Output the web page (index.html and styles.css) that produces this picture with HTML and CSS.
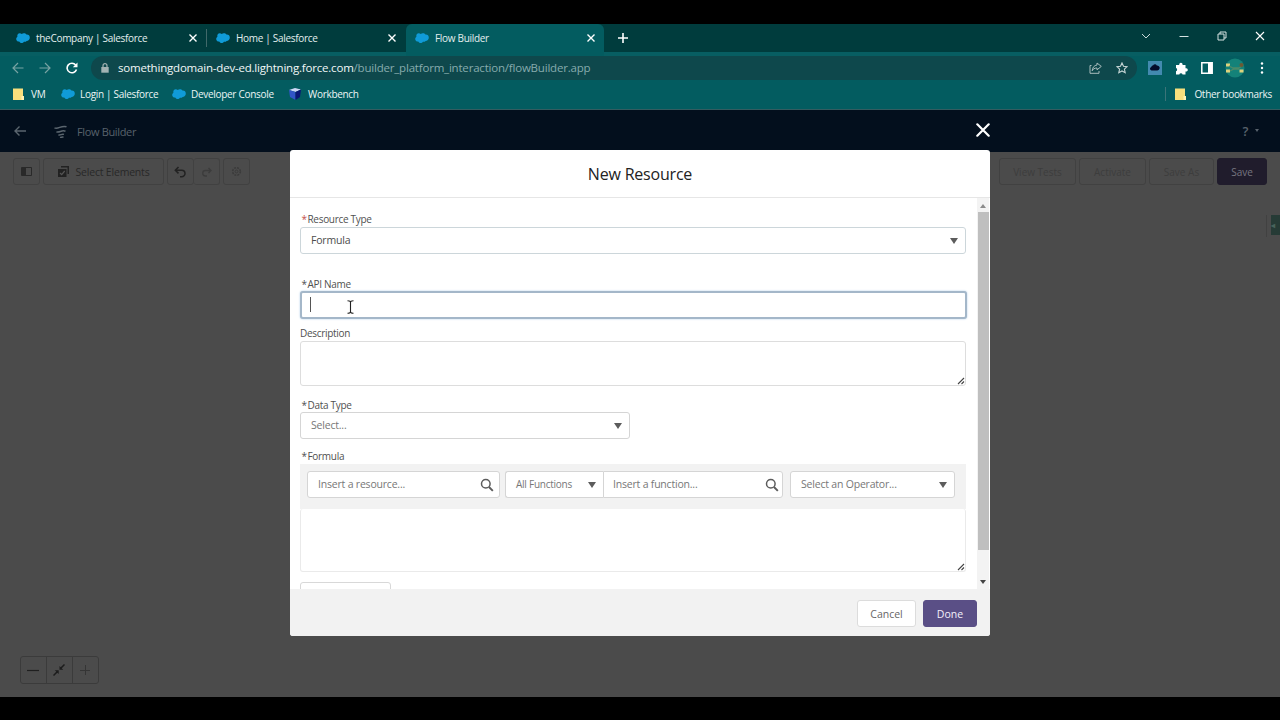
FILE: index.html
```
<!DOCTYPE html>
<html lang="en">
<head>
    <meta charset="UTF-8">
    <meta name="viewport" content="width=device-width, initial-scale=1.0">
    <title>Flow Builder</title>
    <link rel="stylesheet" href="styles.css">
</head>
<body>
    <svg class="defs" width="0" height="0">
        <symbol id="cloud" viewBox="0 0 14 10">
            <path fill="#109bd7" d="M5.8 1.1A2.9 2.9 0 0 1 8 .3c1 0 1.900.5 2.400 1.300A3.200 3.200 0 0 1 13.800 4.700c0 1.800-1.500 3.200-3.200 3.200-.6.8-1.700 1.200-2.600.8C7.500 9.500 6.600 10 5.600 10 4.500 10 3.600 9.400 3.200 8.500 1.500 8.700.200 7.500.200 5.900c0-.9.500-1.700 1.200-2.200C.9 2 2.100.300 3.700.300c.8 0 1.600.3 2.100.8z"/>
        </symbol>
        <symbol id="cross" viewBox="0 0 10 10">
            <path d="M1.500 1.500l7 7M8.500 1.500l-7 7" fill="none" stroke="currentColor"/>
        </symbol>
        <symbol id="search" viewBox="0 0 14 14">
            <circle cx="5.800" cy="5.800" r="4.300" fill="none" stroke="#5c5c5c" stroke-width="1.500"/>
            <path d="M9 9l3.800 3.900" stroke="#5c5c5c" stroke-width="1.900"/>
        </symbol>
        <symbol id="resize" viewBox="0 0 8 8">
            <path d="M1 7l6-6M4.500 7L7 4.500" stroke="#444" stroke-width="1.100"/>
        </symbol>
        <symbol id="note" viewBox="0 0 11 12">
            <path fill="#f7df7c" d="M0 .500h10v7.500h1v4H0z"/>
            <path fill="#fff3b5" d="M8.500 8H11v4H8.500z"/>
        </symbol>
    </svg>

    <div class="screen">
        <!-- browser -->
        <div class="tabs">
            <div class="tab first">
                <svg class="cloud"><use href="#cloud"/></svg>
                <span>theCompany | Salesforce</span>
                <svg class="close"><use href="#cross"/></svg>
            </div>
            <div class="tab second">
                <svg class="cloud"><use href="#cloud"/></svg>
                <span>Home | Salesforce</span>
                <svg class="close"><use href="#cross"/></svg>
            </div>
            <div class="tab active">
                <svg class="cloud"><use href="#cloud"/></svg>
                <span>Flow Builder</span>
                <svg class="close"><use href="#cross"/></svg>
            </div>
            <svg class="new-tab" viewBox="0 0 12 12"><path d="M6 1v10M1 6h10" stroke="#fff" stroke-width="1.600"/></svg>
            <div class="window-btns">
                <svg width="10" height="10" viewBox="0 0 10 10"><path d="M1 3l4 4 4-4" fill="none" stroke="#c8dada"/></svg>
                <svg width="10" height="10" viewBox="0 0 10 10"><path d="M.5 5.500h9" stroke="#d5e2e2"/></svg>
                <svg width="10" height="10" viewBox="0 0 10 10"><path d="M1 3h6v6H1zM3 3V1h6v6H7" fill="none" stroke="#d5e2e2"/></svg>
                <svg width="10" height="10" viewBox="0 0 10 10"><path d="M1 1l8 8M9 1L1 9" stroke="#fff" stroke-width="1.100"/></svg>
            </div>
        </div>

        <div class="address-row">
            <svg class="nav" viewBox="0 0 12 12"><path d="M11.500 6H1M6 1L1 6l5 5" fill="none" stroke="#78a3a3" stroke-width="1.200"/></svg>
            <svg class="nav" viewBox="0 0 12 12"><path d="M.5 6H11M6 1l5 5-5 5" fill="none" stroke="#78a3a3" stroke-width="1.200"/></svg>
            <svg class="nav" viewBox="0 0 12 12"><path d="M10.500 7.500A4.800 4.800 0 1 1 9.700 3" fill="none" stroke="#fff" stroke-width="1.600"/><path d="M11.500.5v4.700H6.800z" fill="#fff"/></svg>
            <div class="address">
                <svg width="8" height="10" viewBox="0 0 8 10"><path d="M2 4.500V2.700a2 2 0 0 1 4 0v1.800" fill="none" stroke="#a3b3b3" stroke-width="1.200"/><path d="M.3 4h7.400v5.700H.3z" fill="#a3b3b3"/></svg>
                <p class="url"><span>somethingdomain-dev-ed.lightning.force.com</span>/builder_platform_interaction/flowBuilder.app</p>
                <svg class="share" viewBox="0 0 13 12"><path d="M2.500 3.500H1v7.800h9V9" fill="none" stroke="#a9bcbc"/><path d="M8 1l4.300 3.400L8 7.800V6C5.500 6 4 7 3.200 8.800 3.400 5.500 5.300 3.300 8 3z" fill="none" stroke="#a9bcbc"/></svg>
                <svg class="star" viewBox="0 0 12 12"><path d="M6 .9l1.500 3.300 3.600.4-2.700 2.500.8 3.600L6 8.900l-3.200 1.800.8-3.600L.9 4.600l3.600-.4z" fill="none" stroke="#c5d5d5" stroke-width="1.100"/></svg>
            </div>
            <div class="extensions">
                <svg width="14" height="14" viewBox="0 0 14 14"><path d="M0 0h14v14H0z" fill="#438ab0"/><path d="M5 4.500c1-1.500 3-1.500 3.800-.1 1.500-.1 2.900.9 2.900 2.400S10.300 9.600 9 9.500H3.500C1.500 9 1.500 6.500 3.300 6c.1-.8.800-1.500 1.700-1.500z" fill="#030b2a"/></svg>
                <svg width="13" height="13" viewBox="0 0 13 13"><path d="M1 3h3.300a1.700 1.700 0 1 1 3.200 0h3v3.300a1.700 1.700 0 1 1 0 3.200v3H7.600a1.700 1.700 0 0 0-3.300 0H1V9.300a1.700 1.700 0 0 0 0-3.200z" fill="#fff"/></svg>
                <svg width="12" height="12" viewBox="0 0 12 12"><path d="M.8.8h10.400v10.400H.8z" fill="none" stroke="#fff" stroke-width="1.500"/><path d="M7 1h4v10H7z" fill="#fff"/></svg>
                <svg class="avatar" viewBox="0 0 20 20"><circle cx="10" cy="10" r="9.500" fill="#148279"/><path d="M1 5.500h4v3H1zM1 11.500h4v3H1zM14.500 11.500h4v3h-4z" fill="#ddd27c"/><path d="M4 8l4 2h6l3-2M5 13l4-2h5" fill="none" stroke="#4c8a68" stroke-width="1.300"/><circle cx="16.500" cy="7" r="2" fill="#6b5933"/></svg>
                <svg width="4" height="12" viewBox="0 0 4 12"><g fill="#fff"><circle cx="2" cy="1.500" r="1.200"/><circle cx="2" cy="6" r="1.200"/><circle cx="2" cy="10.500" r="1.200"/></g></svg>
            </div>
        </div>

        <div class="bookmarks">
            <svg class="note"><use href="#note"/></svg>
            <span class="b1">VM</span>
            <svg class="cloud"><use href="#cloud"/></svg>
            <span class="b2">Login | Salesforce</span>
            <svg class="cloud"><use href="#cloud"/></svg>
            <span class="b3">Developer Console</span>
            <svg class="cube" viewBox="0 0 12 12"><path d="M0 2l6-2 6 1.500L6.500 4z" fill="#cbd7f5"/><path d="M0 2l6.500 2v8L1 9z" fill="#3155c6"/><path d="M6.500 4L12 1.500 11 9l-4.500 3z" fill="#0b1775"/></svg>
            <span class="b4">Workbench</span>
            <div class="other">
                <svg class="note"><use href="#note"/></svg>
                <span>Other bookmarks</span>
            </div>
        </div>

        <!-- flow builder, dimmed under the modal -->
        <div class="app-header">
            <svg class="back" viewBox="0 0 12 10"><path d="M12 5H1M5.500.5L1 5l4.500 4.500" fill="none" stroke="#5b666f" stroke-width="1.400"/></svg>
            <svg class="flow-icon" viewBox="0 0 13 13"><path d="M.5 2.800C4 4.800 7.500-.2 12.500 1.800M2.500 6.700c3 1.400 5-2.200 9-.5M4.500 9.800c2 .9 3-1.300 5.500-.4M6 12.300c1.200.4 2-.5 3.500-.1" fill="none" stroke="#5b666f" stroke-width="1.500"/></svg>
            <span>Flow Builder</span>
            <div class="help">?<i></i></div>
        </div>

        <div class="toolbar">
            <div class="btn panel-btn">
                <svg width="11" height="9" viewBox="0 0 11 9"><path d="M.5.5h10v8H.5z" fill="none" stroke="#292929"/><path d="M1 1h4v7H1z" fill="#292929"/></svg>
            </div>
            <div class="btn select-btn">
                <svg width="11" height="11" viewBox="0 0 11 11"><path d="M3 0h8v8H9.500V1.500H3z" fill="#222"/><path d="M0 3h8.500v8H0z" fill="#222"/><path d="M2 7l1.700 1.700L6.700 5" fill="none" stroke="#555" stroke-width="1.200"/></svg>
                <span>Select Elements</span>
            </div>
            <div class="btn-group">
                <div class="btn"><svg width="12" height="12" viewBox="0 0 12 12"><path d="M4.500 1L1.300 4.200l3.200 3.200M1.500 4.200h6.200a3.300 3.300 0 0 1 0 6.600H6" fill="none" stroke="#222" stroke-width="1.500"/></svg></div>
                <div class="btn"><svg width="11" height="10" viewBox="0 0 11 10"><path d="M7.500 1l2.500 2.500L7.500 6M10 3.500H4.500a2.700 2.700 0 0 0 0 5.500H6" fill="none" stroke="#3c3c3c" stroke-width="1.300"/></svg></div>
            </div>
            <div class="btn gear-btn">
                <svg width="11" height="11" viewBox="0 0 11 11"><circle cx="5.500" cy="5.500" r="3.800" fill="none" stroke="#3b3b3b" stroke-width="1.600" stroke-dasharray="2 1"/><circle cx="5.500" cy="5.500" r="1.400" fill="none" stroke="#3b3b3b"/></svg>
            </div>
            <div class="toolbar-right">
                <div class="btn faded view-btn">View Tests</div>
                <div class="btn faded activate-btn">Activate</div>
                <div class="btn faded saveas-btn">Save As</div>
                <div class="btn save-btn">Save</div>
            </div>
        </div>

        <div class="canvas">
            <div class="side-tab"><b>◂</b></div>
            <div class="zoom-btns">
                <div><svg width="12" height="12" viewBox="0 0 12 12"><path d="M0 6.500h12" stroke="#1f1f1f" stroke-width="1.200"/></svg></div>
                <div><svg width="12" height="12" viewBox="0 0 12 12"><path d="M11.500.500L7.500 4.500M.500 11.500l4-4" stroke="#1c1c1c" stroke-width="1.500"/><path d="M6.500 2v3.700h3.700zM1.800 6.300h3.900V10z" fill="#1c1c1c"/></svg></div>
                <div><svg width="12" height="12" viewBox="0 0 12 12"><path d="M1 6.500h10M6.500 1v10" stroke="#353535"/></svg></div>
            </div>
        </div>

        <svg class="modal-close" viewBox="0 0 14 14"><path d="M1.300 1.300l11.400 11.400M12.700 1.300L1.300 12.700" stroke="#fff" stroke-width="2.200" stroke-linecap="round"/></svg>

        <div class="modal">
            <div class="modal-header"><h1>New Resource</h1></div>
            <div class="modal-body">
                <div class="form">
                    <label class="l-type"><em class="red">*</em>Resource Type</label>
                    <div class="field type-field"><span>Formula</span><i class="arrow"></i></div>

                    <label class="l-api"><em>*</em>API Name</label>
                    <div class="field focused">
                        <b class="caret"></b>
                        <svg class="ibeam" viewBox="0 0 7 14"><path d="M.5.700c1.500 0 3 .3 3 1.500v9.600c0 1.200-1.500 1.500-3 1.500M6.500.700c-1.500 0-3 .3-3 1.500v9.600c0 1.200 1.500 1.500 3 1.500" fill="none" stroke="#222" stroke-width="1.100"/></svg>
                    </div>

                    <label class="l-desc">Description</label>
                    <div class="area desc"><svg class="resize"><use href="#resize"/></svg></div>

                    <label class="l-data"><em>*</em>Data Type</label>
                    <div class="field data-field hint"><span>Select...</span><i class="arrow"></i></div>

                    <label class="l-formula"><em>*</em>Formula</label>
                    <div class="formula-bar">
                        <div class="field hint res"><span>Insert a resource...</span><svg class="search"><use href="#search"/></svg></div>
                        <div class="field hint funcs"><span>All Functions</span><i class="arrow"></i></div>
                        <div class="field hint func"><span>Insert a function...</span><svg class="search"><use href="#search"/></svg></div>
                        <div class="field hint oper"><span>Select an Operator...</span><i class="arrow"></i></div>
                    </div>
                    <div class="area editor"><svg class="resize"><use href="#resize"/></svg></div>
                    <div class="check-btn"></div>
                </div>
                <div class="scrollbar">
                    <i class="up"></i>
                    <div class="thumb"></div>
                    <i class="down"></i>
                </div>
            </div>
            <div class="modal-footer">
                <div class="cancel">Cancel</div>
                <div class="done">Done</div>
            </div>
        </div>
    </div>
</body>
</html>
```
FILE: styles.css
```
*{
    margin: 0;
    padding: 0;
    box-sizing: border-box;
}
body{
    width: 1280px;
    height: 720px;
    padding-top: 24px;
    background-color: #000;
    font-family: "Open Sans", "Noto Sans", sans-serif;
    font-size: 10px;
    overflow: hidden;
}
svg{
    display: block;
    flex-shrink: 0;
}
.defs{
    position: absolute;
}
span, label{
    white-space: nowrap;
}
.screen{
    position: relative;
    height: 673px;
    display: flex;
    flex-direction: column;
}
.cloud{
    width: 14px;
    height: 10px;
}
.note{
    width: 11px;
    height: 12px;
}

/* browser */
.tabs{
    height: 32px;
    display: flex;
    background: linear-gradient(#003c3d 28px, #075e62 28px);
    color: #e3eeee;
    letter-spacing: -0.3px;
}
.tab{
    height: 28px;
    display: flex;
    align-items: center;
}
.tab span{
    flex: 1;
    margin-left: 6px;
}
.first{
    width: 207px;
    padding: 0 8px 0 16px;
    border-right: 1px solid transparent;
    border-image: linear-gradient(transparent 6px, #41696a 6px, #41696a 22px, transparent 22px) 1;
}
.second{
    width: 199px;
    padding: 0 9px 0 9px;
}
.active{
    width: 198px;
    height: 32px;
    padding: 0 8px 4px 9px;
    background-color: #035c60;
    border-radius: 6px 6px 0 0;
}
.close{
    width: 10px;
    height: 10px;
    stroke-width: 1.4;
    color: #fff;
}
.new-tab{
    width: 12px;
    height: 12px;
    margin: 8px 0 0 13px;
}
.window-btns{
    display: flex;
    gap: 28px;
    margin: 7px 15px 0 auto;
}
.address-row{
    height: 26px;
    display: flex;
    align-items: center;
    padding: 0 16px 2px 12px;
    background-color: #035c60;
}
.nav{
    width: 12px;
    height: 12px;
    margin-right: 15px;
}
.address{
    width: 1046px;
    height: 24px;
    display: flex;
    align-items: center;
    padding: 0 9px 0 10px;
    margin-left: -2px;
    border-radius: 12px;
    background-color: #0e484c;
}
.url{
    flex: 1;
    margin-left: 9px;
    padding-bottom: 2px;
    font-size: 11.5px;
    letter-spacing: -0.2px;
    color: #86abac;
    white-space: nowrap;
}
.url span{
    color: #f1f7f7;
}
.share{
    width: 13px;
    height: 12px;
    margin-right: 14px;
}
.star{
    width: 12px;
    height: 12px;
}
.extensions{
    display: flex;
    align-items: center;
    gap: 13px;
    margin-left: 11px;
}
.avatar{
    width: 20px;
    height: 20px;
    margin: 0 2px 0 -1px;
}
.bookmarks{
    height: 28px;
    display: flex;
    align-items: center;
    padding: 0 8px 3px 13px;
    background-color: #035c60;
    border-bottom: 1px solid #345c60;
    color: #edf5f5;
    letter-spacing: -0.3px;
}
.bookmarks .b1{
    width: 16px;
    margin: 0 14px 0 7px;
}
.bookmarks .b2{
    width: 78px;
    margin: 0 14px 0 5px;
}
.bookmarks .b3{
    width: 84px;
    margin: 0 14px 0 5px;
}
.cube{
    width: 12px;
    height: 12px;
    margin-right: 7px;
}
.other{
    height: 14px;
    display: flex;
    align-items: center;
    gap: 8px;
    margin-left: auto;
    padding-left: 9px;
    border-left: 1px solid #3b7478;
}

/* flow builder */
.app-header{
    height: 42px;
    display: flex;
    align-items: center;
    padding: 0 21px 0 14px;
    background-color: #030f1d;
    color: #58626c;
    font-size: 11px;
    letter-spacing: -0.35px;
}
.back{
    width: 12px;
    height: 10px;
}
.flow-icon{
    width: 13px;
    height: 13px;
    margin: 0 10px 0 28px;
}
.help{
    display: flex;
    align-items: center;
    gap: 7px;
    margin-left: auto;
    font-size: 13px;
    font-weight: 600;
}
.help i{
    border: 2px solid transparent;
    border-top: 3px solid #58626c;
}
.toolbar{
    height: 40px;
    display: flex;
    align-items: center;
    padding: 0 13px 1px;
    background-color: #4b4b4b;
    color: #282828;
}
.btn{
    height: 27px;
    display: flex;
    align-items: center;
    justify-content: center;
    border: 1px solid #414141;
    border-radius: 3px;
}
.panel-btn{
    width: 27px;
    margin-right: 3px;
}
.select-btn{
    width: 121px;
    gap: 7px;
    font-size: 10.5px;
    letter-spacing: -0.2px;
    margin-right: 3px;
}
.btn-group{
    display: flex;
    margin-right: 3px;
}
.btn-group .btn{
    width: 26.5px;
}
.btn-group .btn + .btn{
    border-left: 0;
}
.gear-btn{
    width: 27px;
}
.toolbar-right{
    display: flex;
    gap: 3px;
    margin-left: auto;
}
.faded{
    color: #3d3d3d;
}
.view-btn{
    width: 77px;
}
.activate-btn{
    width: 67px;
}
.saveas-btn{
    width: 65px;
}
.save-btn{
    width: 50px;
    background-color: #201c2c;
    border-color: #201c2c;
    color: #777680;
}
.canvas{
    flex: 1;
    display: flex;
    flex-direction: column;
    justify-content: space-between;
    padding: 23px 0 13px 20px;
    background-color: #4b4b4b;
}
.side-tab{
    align-self: flex-end;
    width: 14px;
    height: 22px;
    padding-left: 4px;
    border-left: 1px solid #414141;
}
.side-tab b{
    display: block;
    height: 20px;
    line-height: 20px;
    background-color: #263b36;
    color: #48635c;
    font-size: 8px;
}
.zoom-btns{
    width: 79px;
    height: 28px;
    display: flex;
    border: 1px solid #3b3b3b;
    border-radius: 3px;
}
.zoom-btns div{
    flex: 1;
    display: flex;
    align-items: center;
    justify-content: center;
    padding-right: 1px;
}
.zoom-btns div + div{
    border-left: 1px solid #3b3b3b;
}

/* modal */
.modal-close{
    position: absolute;
    left: 976px;
    top: 99px;
    width: 14px;
    height: 14px;
}
.modal{
    position: absolute;
    left: 290px;
    top: 126px;
    width: 700px;
    height: 486px;
    display: flex;
    flex-direction: column;
    background-color: #fff;
    border-radius: 3px;
    overflow: hidden;
    color: #4c4c4c;
}
.modal-header{
    height: 48px;
    border-bottom: 1px solid #e6e6e6;
}
h1{
    font-size: 16px;
    font-weight: 400;
    letter-spacing: -0.2px;
    line-height: 48px;
    text-align: center;
    color: #222;
}
.modal-body{
    height: 391px;
    display: flex;
    justify-content: space-between;
    padding: 0 1px 0 10px;
    overflow: hidden;
}
.form{
    width: 666px;
}
label{
    display: block;
    height: 14px;
    line-height: 14px;
    font-size: 10px;
    letter-spacing: -0.3px;
    color: #505050;
}
label em{
    display: inline-block;
    width: 7.5px;
    padding-left: 1.5px;
    font-style: normal;
}
label .red{
    color: #c4504a;
}
.l-type{
    margin: 14px 0 1px;
}
.l-api{
    margin: 23px 0 0;
}
.l-desc{
    margin: 7px 0 1px;
}
.l-data{
    margin: 12px 0 0;
}
.l-formula{
    margin: 10px 0 1px;
}
.field{
    height: 27px;
    display: flex;
    align-items: center;
    justify-content: space-between;
    padding: 0 7px 0 10px;
    background-color: #fff;
    border: 1px solid #d5d5d5;
    border-radius: 3px;
    font-size: 10.5px;
    letter-spacing: -0.2px;
}
.field span{
    padding-bottom: 1px;
}
.hint{
    color: #777;
}
.type-field{
    border-color: #ccd6da;
}
.focused{
    width: 667px;
    height: 28px;
    justify-content: flex-start;
    border: 2px solid #a4b7c9;
    box-shadow: 0 0 2px #a9c9e6;
    padding-left: 8px;
}
.caret{
    width: 1px;
    height: 15px;
    margin-bottom: 1px;
    background-color: #555;
}
.ibeam{
    width: 7px;
    height: 14px;
    margin: 4px 0 0 36px;
}
.arrow{
    border: 4px solid transparent;
    border-top: 6px solid #5c5c5c;
    border-bottom: 0;
}
.area{
    display: flex;
    align-items: flex-end;
    justify-content: flex-end;
    border: 1px solid #ddd;
    border-radius: 3px;
}
.resize{
    width: 8px;
    height: 8px;
}
.desc{
    height: 45px;
}
.data-field{
    width: 330px;
}
.formula-bar{
    height: 45px;
    display: flex;
    padding: 7px 7px;
    background-color: #f2f2f2;
}
.res{
    width: 193px;
    margin-right: 5px;
    padding-right: 5px;
}
.funcs{
    width: 98px;
    padding-right: 7px;
    border-right: 0;
    border-radius: 3px 0 0 3px;
    font-size: 10px;
    letter-spacing: -0.25px;
}
.func{
    width: 180px;
    margin-right: 7px;
    padding: 0 3px 0 9px;
    border-radius: 0 3px 3px 0;
}
.oper{
    width: 165px;
}
.search{
    width: 14px;
    height: 14px;
}
.editor{
    height: 63px;
    border-color: #eaeaea;
    border-top: 0;
}
.check-btn{
    width: 91px;
    height: 27px;
    margin-top: 10px;
    border: 1px solid #d8d8d8;
    border-radius: 3px;
}
.scrollbar{
    width: 12px;
    display: flex;
    flex-direction: column;
    align-items: center;
    background-color: #f3f3f3;
}
.up{
    margin: 6px 0 4px;
    border: 3px solid transparent;
    border-top: 0;
    border-bottom: 4px solid #8b8b8b;
}
.thumb{
    width: 11px;
    height: 338px;
    background-color: #bfbfbf;
}
.down{
    margin-top: 30px;
    border: 3px solid transparent;
    border-bottom: 0;
    border-top: 4px solid #444;
}
.modal-footer{
    flex: 1;
    display: flex;
    justify-content: flex-end;
    gap: 7px;
    padding: 11px 13px 0 0;
    background-color: #f2f2f2;
}
.cancel, .done{
    height: 27px;
    line-height: 26px;
    text-align: center;
    font-size: 10.5px;
    border: 1px solid #dcdcdc;
    border-radius: 3px;
}
.cancel{
    width: 59px;
    background-color: #fff;
    color: #666;
}
.done{
    width: 54px;
    background-color: #5a4f86;
    border-color: #5a4f86;
    color: #f4f1fb;
}
```
